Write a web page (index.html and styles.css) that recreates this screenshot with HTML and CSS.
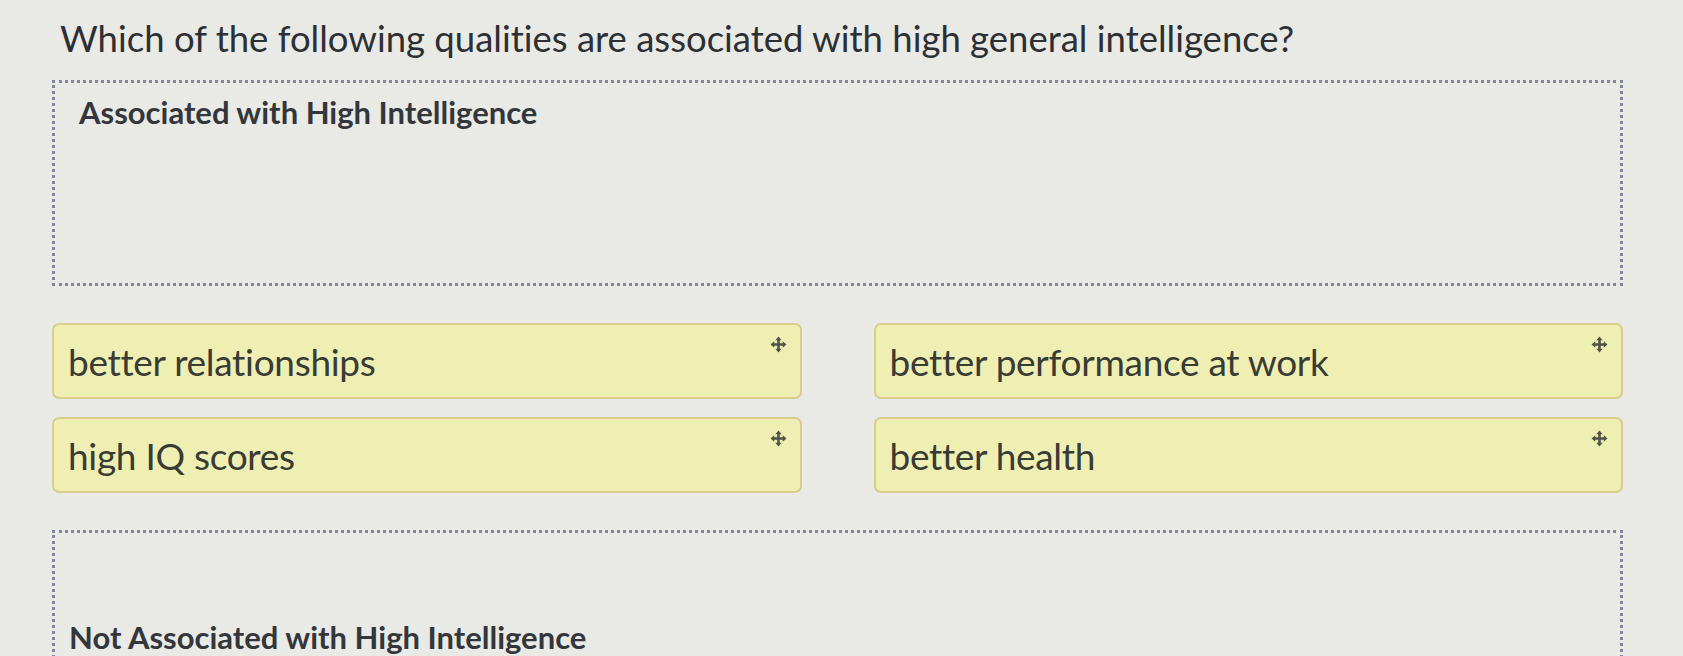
FILE: index.html
```html
<!DOCTYPE html>
<html>
<head>
<meta charset="utf-8">
<link rel="stylesheet" href="styles.css">
</head>
<body>
<div class="page">
  <h1 class="question">Which of the following qualities are associated with high general intelligence?</h1>
  <div class="zone zone-top">
    <div class="zone-label">Associated with High Intelligence</div>
  </div>
  <div class="cards">
    <div class="card"><span class="card-text">better relationships</span>
      <svg class="move" viewBox="0 0 16 16"><path d="M8 0.5 L11 4 H9.2 V6.8 H12 V5 L15.5 8 L12 11 V9.2 H9.2 V12 H11 L8 15.5 L5 12 H6.8 V9.2 H4 V11 L0.5 8 L4 5 V6.8 H6.8 V4 H5 Z"/></svg>
    </div>
    <div class="card"><span class="card-text">better performance at work</span>
      <svg class="move" viewBox="0 0 16 16"><path d="M8 0.5 L11 4 H9.2 V6.8 H12 V5 L15.5 8 L12 11 V9.2 H9.2 V12 H11 L8 15.5 L5 12 H6.8 V9.2 H4 V11 L0.5 8 L4 5 V6.8 H6.8 V4 H5 Z"/></svg>
    </div>
    <div class="card"><span class="card-text">high IQ scores</span>
      <svg class="move" viewBox="0 0 16 16"><path d="M8 0.5 L11 4 H9.2 V6.8 H12 V5 L15.5 8 L12 11 V9.2 H9.2 V12 H11 L8 15.5 L5 12 H6.8 V9.2 H4 V11 L0.5 8 L4 5 V6.8 H6.8 V4 H5 Z"/></svg>
    </div>
    <div class="card"><span class="card-text">better health</span>
      <svg class="move" viewBox="0 0 16 16"><path d="M8 0.5 L11 4 H9.2 V6.8 H12 V5 L15.5 8 L12 11 V9.2 H9.2 V12 H11 L8 15.5 L5 12 H6.8 V9.2 H4 V11 L0.5 8 L4 5 V6.8 H6.8 V4 H5 Z"/></svg>
    </div>
  </div>
  <div class="zone zone-bottom">
    <div class="zone-label">Not Associated with High Intelligence</div>
  </div>
</div>
</body>
</html>
```
FILE: styles.css
```css
html, body {
  margin: 0;
  padding: 0;
  background: #e9e9e5;
  overflow: hidden;
}
.page {
  padding: 14px 60px 0 52px;
  font-family: Lato, "Liberation Sans", sans-serif;
  font-variant-ligatures: none;
  color: #30343a;
}
.question {
  margin: 0 0 0 8px;
  font-size: 36.5px;
  font-weight: 400;
  line-height: 48px;
  color: #2c3035;
}
.zone {
  border: 3px dotted #83859f;
  box-sizing: border-box;
}
.zone-top {
  margin-top: 18px;
  height: 206px;
  padding: 11px 24px;
}
.zone-label {
  font-size: 31px;
  font-weight: 700;
  line-height: 36px;
  color: #33363b;
}
.cards {
  margin-top: 37px;
  display: grid;
  grid-template-columns: 1fr 1fr;
  column-gap: 72px;
  row-gap: 18px;
}
.card {
  position: relative;
  height: 76px;
  box-sizing: border-box;
  background: #efeeb3;
  border: 2px solid #d8cd8c;
  border-radius: 7px;
  display: flex;
  align-items: center;
  padding: 0 14px;
}
.card-text {
  font-size: 37px;
  letter-spacing: -0.3px;
  color: #383c35;
}
.move {
  position: absolute;
  top: 11px;
  right: 13px;
  width: 17px;
  height: 17px;
  fill: #4f5446;
}
.zone-bottom {
  margin-top: 37px;
  height: 200px;
  padding: 86px 14px 0;
}
```
